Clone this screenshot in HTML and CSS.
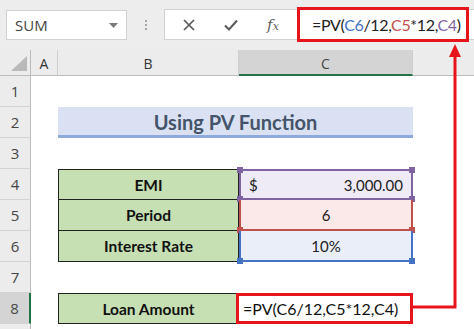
FILE: index.html
```html
<!DOCTYPE html>
<html>
<head>
<meta charset="utf-8">
<link rel="stylesheet" href="styles.css">
</head>
<body>
<div class="app">
  <div class="toolbar">
    <div class="namebox">
      <span class="nb-text">SUM</span>
      <svg class="caret" width="9" height="5" viewBox="0 0 9 5"><polygon points="0,0 9,0 4.5,5" fill="#7a7a7a"/></svg>
    </div>
    <div class="dots"><i></i><i></i><i></i></div>
    <div class="fbar">
      <div class="fbtns">
        <div class="fbtn">
          <svg width="12" height="12" viewBox="0 0 12 12"><path d="M1 1 L11 11 M11 1 L1 11" stroke="#5a5a5a" stroke-width="1.7" fill="none"/></svg>
        </div>
        <div class="fbtn">
          <svg width="14" height="12" viewBox="0 0 14 12"><path d="M1 6.5 L5 10.5 L13 1.5" stroke="#5a5a5a" stroke-width="2" fill="none"/></svg>
        </div>
        <div class="fbtn"><span class="fx">f<span class="fx-x">x</span></span></div>
      </div>
      <div class="formula">=PV(<span class="ref-b">C6</span>/12,<span class="ref-r">C5</span>*12,<span class="ref-p">C4</span>)</div>
    </div>
  </div>

  <div class="sheet">
    <div class="corner"><svg width="16" height="15" viewBox="0 0 16 15"><polygon points="16,0 16,15 0,15" fill="#b9b9b9"/></svg></div>
    <div class="colhead">A</div>
    <div class="colhead">B</div>
    <div class="colhead sel">C</div>
    <div class="colhead last"></div>

    <div class="rowhead">1</div><div></div><div></div><div></div><div></div>

    <div class="rowhead">2</div><div></div>
    <div class="title">Using PV Function</div>
    <div></div>

    <div class="rowhead">3</div><div></div><div></div><div></div><div></div>

    <div class="rowhead">4</div><div></div>
    <div class="label first">EMI</div>
    <div class="val c4"><span>$</span><span>3,000.00</span><i class="h tl"></i><i class="h tr"></i><i class="h bl"></i><i class="h br"></i></div>
    <div></div>

    <div class="rowhead">5</div><div></div>
    <div class="label">Period</div>
    <div class="val c5">6<i class="h bl"></i><i class="h br"></i></div>
    <div></div>

    <div class="rowhead">6</div><div></div>
    <div class="label">Interest Rate</div>
    <div class="val c6">10%<i class="h bl"></i><i class="h br"></i></div>
    <div></div>

    <div class="rowhead">7</div><div></div><div></div><div></div><div></div>

    <div class="rowhead sel">8</div><div></div>
    <div class="label first">Loan Amount</div>
    <div class="c8">=PV(C6/12,C5*12,C4)</div>
    <div></div>

    <div class="rowhead"></div><div></div><div></div><div></div><div></div>
  </div>

  <svg class="arrow" width="474" height="329" viewBox="0 0 474 329">
    <polyline points="413,307 455,307 455,54" fill="none" stroke="#e8141b" stroke-width="3"/>
    <polygon points="455,44 449,57 461,57" fill="#e8141b"/>
  </svg>
</div>
</body>
</html>
```

FILE: styles.css
```css
* { box-sizing: border-box; }
html, body { margin: 0; padding: 0; }
body {
  width: 474px;
  height: 329px;
  overflow: hidden;
  background: #fff;
  font-family: "Lato", "Open Sans", "Liberation Sans", sans-serif;
}
.app { position: relative; width: 474px; height: 329px; overflow: hidden; }

.toolbar {
  height: 50px;
  background: #ededed;
  display: flex;
  align-items: center;
  padding-bottom: 1px;
}
.namebox {
  margin-left: 6px;
  width: 121px;
  height: 30px;
  background: #fff;
  border: 1px solid #d2d2d2;
  display: flex;
  align-items: center;
  justify-content: space-between;
  padding: 0 8px 0 8px;
}
.nb-text { font-family: "Open Sans", sans-serif; font-size: 15px; color: #444; }
.caret { margin-top: 1px; }
.dots {
  width: 37px;
  display: flex;
  flex-direction: column;
  align-items: center;
  gap: 2px;
}
.dots i { width: 2px; height: 2px; background: #a8a8a8; display: block; }
.fbar {
  flex: 1;
  height: 31px;
  background: #fff;
  border: 1px solid #d2d2d2;
  border-right: none;
  display: flex;
  align-items: stretch;
}
.fbtns { width: 132px; display: flex; padding-left: 3px; }
.fbtn { width: 42px; display: flex; align-items: center; justify-content: center; }
.fx { font-family: "DejaVu Serif", "Liberation Serif", serif; font-style: italic; font-size: 15px; color: #606060; }
.fx-x { font-size: 11px; }
.formula {
  width: 172px;
  margin: -3px 0;
  border: 3px solid #e8141b;
  padding-left: 12px;
  font-size: 16px;
  letter-spacing: -0.35px;
  line-height: 30px;
  color: #222;
  white-space: nowrap;
  overflow: hidden;
}
.ref-b { color: #4472c4; }
.ref-r { color: #c0504d; }
.ref-p { color: #8064a2; }

.sheet {
  display: grid;
  grid-template-columns: 31px 27px 181px 174px 61px;
  grid-template-rows: 26px repeat(8, 31px) 31px;
}
.corner {
  background: #ececec;
  border-right: 1px solid #bcbcbc;
  border-bottom: 1px solid #bcbcbc;
  display: flex;
  align-items: flex-end;
  justify-content: flex-end;
  padding: 0 3px 4px 0;
}
.colhead {
  background: #ececec;
  border-right: 1px solid #cfcfcf;
  border-bottom: 1px solid #bcbcbc;
  display: flex;
  align-items: center;
  justify-content: center;
  font-family: "Open Sans", sans-serif;
  font-size: 14px;
  color: #333;
  padding-top: 2px;
}
.colhead.sel { background: #d4d4d4; border-bottom: 2px solid #217346; color: #444; }
.colhead.last { border-right: none; }
.rowhead {
  background: #ececec;
  border-right: 1px solid #bcbcbc;
  border-bottom: 1px solid #d2d2d2;
  display: flex;
  align-items: center;
  justify-content: center;
  font-family: "Open Sans", sans-serif;
  font-size: 15px;
  color: #444;
}
.rowhead.sel { background: #d4d4d4; border-right: 2px solid #217346; color: #4a4a4a; }

.title {
  grid-column: span 2;
  background: #d9e1f2;
  border-bottom: 3px solid #8ea9db;
  display: flex;
  align-items: center;
  justify-content: center;
  font-weight: 700;
  font-size: 20px;
  color: #44546a;
  padding-top: 1px;
}
.label {
  background: #c6e0b4;
  border: 1px solid #222;
  border-top: none;
  display: flex;
  align-items: center;
  justify-content: center;
  font-weight: 700;
  font-size: 15.5px;
  color: #111;
}
.label.first { border-top: 1px solid #222; }

.val {
  position: relative;
  display: flex;
  align-items: center;
  justify-content: center;
  font-size: 15px;
  color: #222;
  border-left: 2px solid;
  border-right: 2px solid;
  border-bottom: 2px solid;
}
.c4 { background: #eeeaf6; border-color: #8064a2; border-top: 2px solid #8064a2; justify-content: space-between; padding: 0 8px 0 8px; }
.c5 { background: #fbe9e9; border-color: #c0504d; }
.c6 { background: #e9eef8; border-color: #4472c4; }
.h { position: absolute; width: 6px; height: 6px; display: block; }
.c4 .h { background: #8064a2; }
.c5 .h { background: #c0504d; }
.c6 .h { background: #4472c4; }
.h.tl { left: -4px; top: -4px; }
.h.tr { right: -4px; top: -4px; }
.h.bl { left: -4px; bottom: -4px; }
.h.br { right: -4px; bottom: -4px; }

.c8 {
  margin-left: -3px;
  border: 3px solid #e8141b;
  display: flex;
  align-items: center;
  padding-left: 4px;
  font-size: 16px;
  color: #111;
  white-space: nowrap;
}

.arrow { position: absolute; left: 0; top: 0; pointer-events: none; }
```
